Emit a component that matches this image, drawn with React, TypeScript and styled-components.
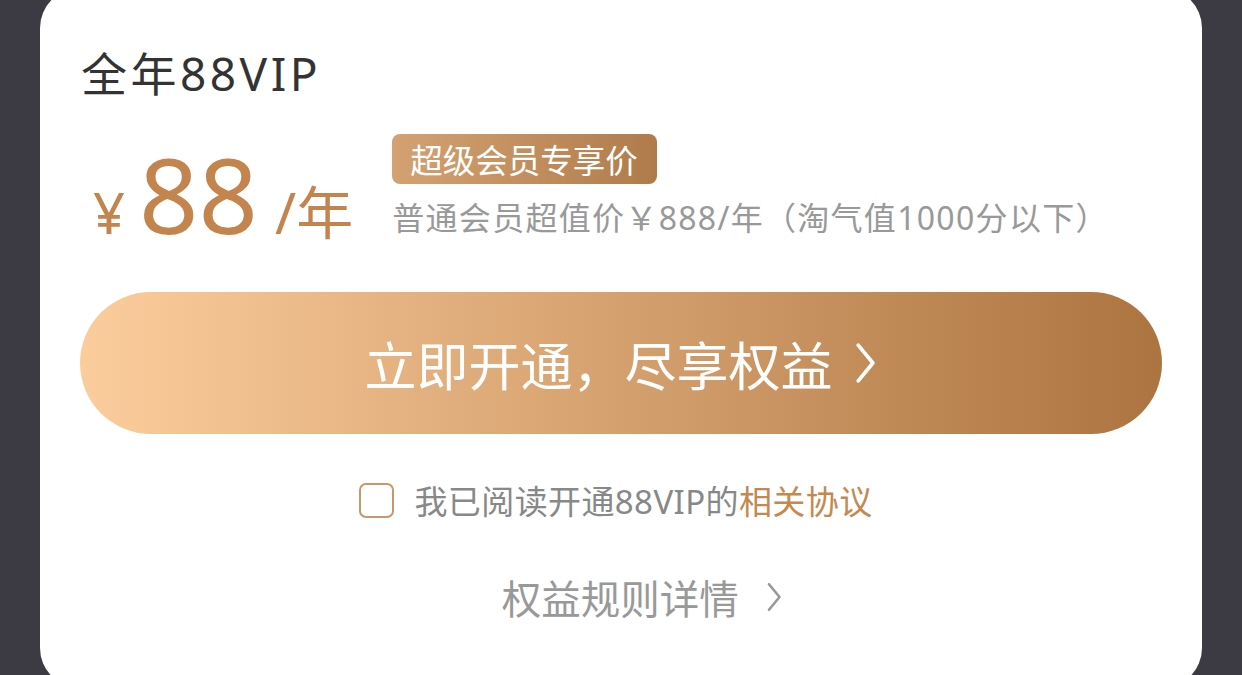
import styled, {createGlobalStyle} from "styled-components";

const GlobalStyle = createGlobalStyle`
  html, body {
    margin: 0;
    padding: 0;
    background-color: #3c3b43;
    overflow: hidden;
  }
  body {
    font-family: "Noto Sans", "Noto Sans CJK SC", sans-serif;
  }
`;

const Page = styled.div`
  width: 1242px;
  height: 675px;
  overflow: hidden;
`;

const Card = styled.div`
  margin: -12px 40px 0;
  height: 700px;
  background-color: #fff;
  border-radius: 40px;
  padding: 62px 40px 0;
  box-sizing: border-box;
  display: flex;
  flex-direction: column;
`;

const Title = styled.h2`
  margin: 0 0 0 1px;
  font-size: 46px;
  font-weight: 400;
  line-height: 1;
  letter-spacing: 3.5px;
  color: #333;
`;

const PriceRow = styled.div`
  display: flex;
  align-items: flex-start;
  margin-top: 38px;
  padding-left: 13px;
  gap: 39px;
`;

const Price = styled.div`
  display: flex;
  align-items: baseline;
  color: #c3844d;
  margin-top: 8px;
`;

const Yen = styled.span`
  font-size: 56px;
  margin-right: 14px;
`;

const Amount = styled.span`
  font-size: 104px;
  line-height: 1;
  margin-right: 17px;
`;

const Unit = styled.span`
  font-size: 57px;
`;

const Offer = styled.div`
  display: flex;
  flex-direction: column;
  align-items: flex-start;
`;

const Badge = styled.span`
  display: inline-flex;
  align-items: center;
  height: 50px;
  padding: 0 19px 0 18px;
  border-radius: 8px;
  background: linear-gradient(to right, #d4a272, #b07b4b);
  color: #fff;
  font-size: 32.5px;
`;

const SubPrice = styled.p`
  margin: 15px 0 0;
  font-size: 32px;
  line-height: 1.2;
  letter-spacing: 1.3px;
  color: #999;
  white-space: nowrap;
`;

const OpenButton = styled.button`
  margin-top: 41px;
  height: 142px;
  width: 100%;
  border: none;
  border-radius: 71px;
  background: linear-gradient(to right, #fccd9c, #ac7440);
  color: #fff;
  font-family: inherit;
  font-size: 52px;
  display: flex;
  align-items: center;
  justify-content: center;
  gap: 22px;
  cursor: pointer;
`;

const AgreeRow = styled.label`
  margin-top: 42px;
  padding-right: 10px;
  display: flex;
  align-items: center;
  justify-content: center;
  gap: 20px;
  font-size: 33px;
  letter-spacing: 0.4px;
  color: #888;
`;

const CheckBox = styled.span`
  width: 35px;
  height: 35px;
  box-sizing: border-box;
  border: 2px solid #c8976a;
  border-radius: 7px;
`;

const Link = styled.span`
  color: #c4894f;
`;

const Rules = styled.div`
  margin-top: 44px;
  margin-left: 42px;
  display: flex;
  align-items: center;
  justify-content: center;
  gap: 27px;
  font-size: 39.5px;
  color: #999;
`;

function Chevron({h, color, width}: {h: number; color: string; width: number}) {
  return (
    <svg width={h * 0.55} height={h} viewBox="0 0 22 40" fill="none">
      <path
        d="M4 3 L18 20 L4 37"
        stroke={color}
        strokeWidth={width}
        strokeLinecap="round"
        strokeLinejoin="round"
      />
    </svg>
  );
}

export default function App() {
  return (
    <Page>
      <GlobalStyle />
      <Card>
        <Title>全年88VIP</Title>
        <PriceRow>
          <Price>
            <Yen>¥</Yen>
            <Amount>88</Amount>
            <Unit>/年</Unit>
          </Price>
          <Offer>
            <Badge>超级会员专享价</Badge>
            <SubPrice>普通会员超值价￥888/年（淘气值1000分以下）</SubPrice>
          </Offer>
        </PriceRow>
        <OpenButton>
          立即开通，尽享权益
          <Chevron h={42} color="#fff" width={3.5} />
        </OpenButton>
        <AgreeRow>
          <CheckBox />
          <span>
            我已阅读开通88VIP的<Link>相关协议</Link>
          </span>
        </AgreeRow>
        <Rules>
          权益规则详情
          <Chevron h={30} color="#999" width={3.5} />
        </Rules>
      </Card>
    </Page>
  );
}
